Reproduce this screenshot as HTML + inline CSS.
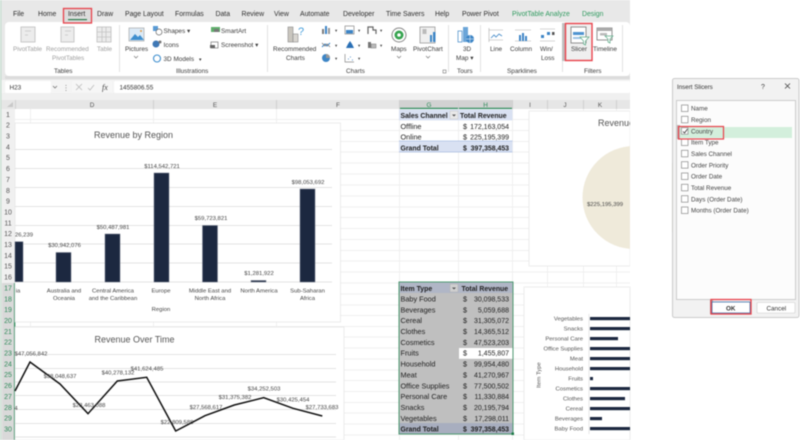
<!DOCTYPE html>
<html><head><meta charset="utf-8"><style>
html,body{margin:0;padding:0;background:#fff;width:800px;height:440px;overflow:hidden}
svg{display:block;filter:blur(.4px)}
text{font-family:"Liberation Sans",sans-serif;font-size:6.4px;fill:#444}
.t{font-size:6.9px;fill:#2e2e2e}
.r{font-size:6.4px;fill:#3c3c3c}
.d{font-size:6.3px;fill:#a0a0a0}
.c{font-size:5.9px;text-anchor:middle;fill:#444}
.h{font-size:6.4px;text-anchor:middle;fill:#555}
.rn{font-size:7px;text-anchor:middle;fill:#555}
.g{fill:#2c8a58}
.p{font-size:7.3px;fill:#222}
.b{font-size:6.9px;font-weight:bold;fill:#222}
.n{font-size:7px;text-anchor:end;fill:#222}
.nb{font-size:6.9px;text-anchor:end;font-weight:bold;fill:#222}
.y{font-size:5.9px;text-anchor:end;fill:#555}
.s{font-size:6.3px;fill:#444}
</style></head><body>
<svg width="800" height="440" viewBox="0 0 800 440" xmlns="http://www.w3.org/2000/svg">
<rect x="0" y="0" width="630" height="100" fill="#e8e8e8"/>
<rect x="5" y="22" width="625" height="54" rx="4" fill="#fff"/>
<rect x="5" y="76" width="625" height="3" fill="#dcdcdc"/>
<rect x="0" y="80" width="630" height="13" fill="#f4f4f4"/>
<rect x="5" y="81" width="46" height="12" rx="2" fill="#fff"/>
<rect x="114" y="81" width="516" height="12" rx="2" fill="#fff"/>
<rect x="72" y="81" width="40" height="12" fill="#f6f6f6"/>
<rect x="0" y="93" width="630" height="7" fill="#f0f0f0"/>

<!-- tabs -->
<g class="t">
<text class="t" x="13" y="16">File</text><text class="t" x="38" y="16">Home</text>
<rect x="63" y="8" width="29" height="15" fill="#dcdcdc"/>
<text class="t" x="68" y="16">Insert</text>
<rect x="68" y="19" width="19" height="1.2" fill="#2b7a4b"/>
<rect x="63.5" y="8.5" width="28" height="14.500" fill="none" stroke="#e8414a" stroke-width="1.3"/>
<text class="t" x="97" y="16">Draw</text><text class="t" x="125" y="16">Page Layout</text><text class="t" x="175" y="16">Formulas</text><text class="t" x="215.500" y="16">Data</text><text class="t" x="241.500" y="16">Review</text><text class="t" x="274" y="16">View</text><text class="t" x="300" y="16">Automate</text><text class="t" x="343" y="16">Developer</text><text class="t" x="386" y="16">Time Savers</text><text class="t" x="435" y="16">Help</text><text class="t" x="462" y="16">Power Pivot</text>
<text class="t" x="512" y="16" style="fill:#2f9a5f">PivotTable Analyze</text><text class="t" x="582" y="16" style="fill:#2f9a5f">Design</text>
</g>

<!-- ribbon separators -->
<g fill="#e2e2e2"><rect x="119" y="25" width="1" height="47"/><rect x="267" y="25" width="1" height="47"/><rect x="448" y="25" width="1" height="47"/><rect x="480" y="25" width="1" height="47"/><rect x="562" y="25" width="1" height="47"/><rect x="622" y="25" width="1" height="47"/></g>

<!-- Tables group -->
<g fill="#ececec" stroke="#c8c8c8" stroke-width="1">
<rect x="21" y="27" width="14" height="15"/><rect x="61" y="27" width="13" height="15"/><rect x="97" y="27" width="14" height="15"/>
</g>
<path d="M25 31h6M25 35h3M65 31h6M65 35h3M97 32h14M97 37h14M102 27v15M106 27v15" stroke="#c4c4c4" fill="none" stroke-width=".8"/>
<text class="d" x="13" y="51">PivotTable</text><text class="d" x="46" y="51">Recommended</text><text class="d" x="52" y="60">PivotTables</text><text class="d" x="97" y="51">Table</text>
<text class="r" x="54" y="73">Tables</text>

<!-- Illustrations -->
<rect x="129" y="28" width="15" height="13" fill="#dbeaf6" stroke="#a7a7a7" stroke-width=".7"/><path d="M130 40l5-6 3 3 2-2 4 5z" fill="#3f8fcf"/><circle cx="141" cy="31" r="1" fill="#e39a45"/>
<text class="r" x="125" y="51">Pictures</text><path d="M134 56l2 2 2-2" stroke="#777" fill="none" stroke-width=".7"/>
<rect x="153" y="26" width="5" height="5" fill="#5a9bd5"/><circle cx="159" cy="32" r="3" fill="#fff" stroke="#666" stroke-width=".7"/>
<text class="r" x="163.500" y="33">Shapes ▾</text>
<circle cx="156" cy="44" r="3.500" fill="#3f78b5"/><circle cx="160" cy="42" r="1.500" fill="#777"/>
<text class="r" x="163.500" y="47">Icons</text>
<circle cx="157" cy="58.500" r="3.500" fill="#fff" stroke="#3f8fcf" stroke-width="1.100"/>
<text class="r" x="163.500" y="61">3D Models</text><text class="r" x="199" y="61" style="font-size:5px">▾</text>
<rect x="211" y="27" width="9" height="5" fill="#5fae6b"/><rect x="214" y="29" width="5" height="3" fill="#777"/>
<text class="r" x="221" y="33">SmartArt</text>
<rect x="211" y="42" width="7" height="6" fill="#fff" stroke="#777" stroke-width=".7"/><rect x="210" y="45" width="5" height="3" fill="#666"/>
<text class="r" x="221" y="47">Screenshot ▾</text>
<text class="r" x="176" y="73">Illustrations</text>

<!-- Recommended charts -->
<rect x="288" y="27" width="5" height="15" fill="#c9c5be" stroke="#8a8a8a" stroke-width=".6"/><rect x="293" y="34" width="5" height="8" fill="#d8d5cf" stroke="#8a8a8a" stroke-width=".6"/>
<text x="298" y="35" style="font-size:11px;fill:#4aa0dc">?</text>
<text class="r" x="273" y="51">Recommended</text><text class="r" x="286" y="60">Charts</text>

<!-- Charts group -->
<g>
<rect x="322" y="29" width="2" height="5" fill="#7a7a7a"/><rect x="325" y="26" width="2" height="8" fill="#3d85c6"/><rect x="328" y="28" width="2" height="6" fill="#999"/>
<rect x="345" y="26" width="9" height="8" fill="#fff" stroke="#888" stroke-width=".7"/><rect x="346" y="30" width="7" height="3.500" fill="#3d85c6"/>
<path d="M368 34v-7h5v3h3v4" fill="none" stroke="#666" stroke-width="1.200"/>
<path d="M322 47l3-3 2 2 3-3" stroke="#3d85c6" fill="none" stroke-width="1"/><path d="M322 43l3 3 2-2 3 3" stroke="#777" fill="none" stroke-width=".8"/>
<path d="M346 48l2-4 2-3 2 3 2 4z" fill="#2a6fb5"/>
<rect x="368" y="42" width="3" height="6" fill="#777"/><rect x="371" y="44" width="5" height="4" fill="#b9b9b9" stroke="#777" stroke-width=".5"/>
<circle cx="326" cy="58" r="4" fill="#3d85c6"/><path d="M326 58v-4a4 4 0 0 1 4 4z" fill="#999"/>
<path d="M345 54v8h9" stroke="#888" fill="none" stroke-width=".7"/><path d="M348 59h.8M350 57h.8M352 60h.8" stroke="#3d85c6" stroke-width="1"/>
<text x="335" y="32" style="font-size:4.500px">▾</text><text x="358" y="32" style="font-size:4.500px">▾</text><text x="380" y="32" style="font-size:4.500px">▾</text>
<text x="335" y="47" style="font-size:4.500px">▾</text><text x="358" y="47" style="font-size:4.500px">▾</text><text x="380" y="47" style="font-size:4.500px">▾</text>
<text x="335" y="60" style="font-size:4.500px">▾</text><text x="358" y="60" style="font-size:4.500px">▾</text>
</g>
<text class="r" x="346" y="73">Charts</text>
<rect x="443" y="70" width="3" height="3" fill="none" stroke="#777" stroke-width=".6"/>
<circle cx="399" cy="35" r="7" fill="#fff" stroke="#888"/><circle cx="399" cy="35" r="4.500" fill="#36a34f"/><circle cx="399" cy="35" r="1.800" fill="#fff"/>
<text class="r" x="391" y="51">Maps</text><path d="M397 56l2 2 2-2" stroke="#777" fill="none" stroke-width=".7"/>
<rect x="420" y="27" width="15" height="16" fill="#f0f0f0" stroke="#9a9a9a" stroke-width=".8"/><rect x="430" y="35" width="2" height="7" fill="#3d85c6"/><rect x="433" y="32" width="2.500" height="10" fill="#3d85c6"/><rect x="422.500" y="29" width="4" height="5" fill="#bbb"/>
<text class="r" x="413" y="51">PivotChart</text><path d="M426 56l2 2 2-2" stroke="#777" fill="none" stroke-width=".7"/>

<!-- Tours -->
<rect x="458" y="31" width="4" height="11" fill="#fff" stroke="#3d85c6" stroke-width=".7"/><rect x="463" y="27" width="5" height="15" fill="#6ba5d8"/><circle cx="470" cy="39" r="4" fill="#3d85c6"/><path d="M466 39h8M470 35v8" stroke="#fff" stroke-width=".5"/>
<text class="r" x="463" y="51">3D</text><text class="r" x="456" y="60">Map ▾</text>
<text class="r" x="457" y="73">Tours</text>

<!-- Sparklines -->
<path d="M489 30h14M489 40h14M489 28v14" stroke="#aaa" fill="none" stroke-width=".6"/><path d="M491 38l3-3 2 2 3-3 3 2" stroke="#3d85c6" fill="none" stroke-width=".8"/>
<text class="r" x="490" y="51">Line</text>
<path d="M515 30h16M515 41h16" stroke="#aaa" stroke-width=".6"/><rect x="519" y="35" width="2" height="6" fill="#3d85c6"/><rect x="522" y="33" width="2" height="8" fill="#3d85c6"/><rect x="525" y="36" width="2" height="5" fill="#3d85c6"/>
<text class="r" x="510" y="51">Column</text>
<path d="M540 29h15M540 41h15" stroke="#aaa" stroke-width=".6"/><rect x="541" y="35" width="3" height="3" fill="#3d85c6"/><rect x="547" y="32" width="3" height="3" fill="#3d85c6"/><rect x="552" y="32" width="2.500" height="3" fill="#555"/>
<text class="r" x="540" y="51">Win/</text><text class="r" x="541" y="60">Loss</text>
<text class="r" x="507" y="73">Sparklines</text>

<!-- Filters -->
<rect x="562" y="23" width="4" height="38" fill="#c0c0c0"/>
<rect x="566" y="24" width="25" height="36" fill="#efefef"/>
<rect x="571" y="27" width="15" height="16" fill="#fff" stroke="#777" stroke-width=".8"/><rect x="573" y="32" width="11" height="3" fill="#4f93d0"/><rect x="573" y="37" width="8" height="2" fill="#9dc3e6"/><path d="M580 37h9l-3.500 4v4l-2-1v-3z" fill="#fff" stroke="#59a985" stroke-width=".7"/>
<text class="r" x="571" y="51">Slicer</text>
<rect x="565.500" y="23.500" width="26.500" height="37" fill="none" stroke="#e8414a" stroke-width="1.400"/>
<rect x="597" y="28" width="15" height="12" fill="#fff" stroke="#777" stroke-width=".8"/><rect x="597" y="28" width="15" height="3" fill="#aaa"/><rect x="600" y="33" width="7" height="2.500" fill="#bbb"/><path d="M605 36h8l-3 3v4l-2-1v-3z" fill="#fff" stroke="#59a985" stroke-width=".7"/>
<text class="r" x="593" y="51">Timeline</text>
<text class="r" x="584" y="73">Filters</text>

<!-- formula bar -->
<text x="9.500" y="89.500" style="font-size:6.400px;fill:#333">H23</text>
<path d="M53 86l2 2 2-2" stroke="#666" fill="none" stroke-width=".7"/>
<path d="M66 85v.8M66 87.500v.8M66 90v.8" stroke="#666" stroke-width=".8"/>
<path d="M76 84l6 6M82 84l-6 6M88 88l2 2 4-5" stroke="#bbb" fill="none" stroke-width=".8"/>
<text x="102" y="90" style="font-family:'Liberation Serif',serif;font-style:italic;font-size:8px;fill:#444">fx</text>
<text x="119.500" y="89.500" style="font-size:6.400px;fill:#333">1455806.55</text>

<!-- column headers -->
<rect x="0" y="100" width="630" height="9" fill="#e6e6e6"/>
<rect x="399" y="100" width="114" height="9" fill="#d2d2d2"/>
<rect x="399" y="107.800" width="114" height="1.200" fill="#2c8a58"/>
<path d="M7 107l6-5v5z" fill="#c8c8c8"/>
<path d="M15.500 100v9M153.500 100v9M276.500 100v9M399.500 100v9M458.500 100v9M512.500 100v9M547.500 100v9M583.500 100v9M616.500 100v9" stroke="#cfcfcf" stroke-width="1"/>
<text class="h" x="92" y="107">D</text><text class="h" x="215" y="107">E</text><text class="h" x="338" y="107">F</text>
<text class="h g" x="429" y="107">G</text><text class="h g" x="485.500" y="107">H</text>
<text class="h" x="530" y="107">I</text><text class="h" x="565" y="107">J</text><text class="h" x="600" y="107">K</text>

<!-- sheet grid -->
<rect x="0" y="109" width="630" height="331" fill="#fff"/>
<g stroke="#efefef" stroke-width="1" fill="none">
<path d="M15 119.500H630M15 130.500H630M15 141.500H630M15 152H630M15 163H630M15 174H630M15 185H630M15 196H630M15 207H630M15 217.500H630M15 228.500H630M15 239.500H630M15 250.500H630M15 261H630M15 272H630M15 283H630M15 294H630M15 305H630M15 315.500H630M15 326.500H630M15 337H630M15 348H630M15 359H630M15 370H630M15 380.500H630M15 391.500H630M15 402.500H630M15 413H630M15 424H630M15 435H630"/>
<path d="M30.500 109V440M153.500 109V440M276.500 109V440M399.500 109V440M458.500 109V440M512.500 109V440M547.500 109V440M583.500 109V440M616.500 109V440"/>
</g>

<!-- row headers -->
<rect x="0" y="109" width="15" height="331" fill="#f0f0f0"/>
<rect x="2" y="283" width="13" height="157" fill="#d9d9d9"/>
<rect x="0" y="0" width="1.500" height="440" fill="#c9ded2"/>
<rect x="14" y="283" width="1.300" height="157" fill="#2c8a58"/>
<g>
<text class="rn" x="8" y="116.800">1</text><text class="rn" x="8" y="127.700">2</text><text class="rn" x="8" y="138.500">3</text><text class="rn" x="8" y="149.400">4</text><text class="rn" x="8" y="160.200">5</text><text class="rn" x="8" y="171.100">6</text><text class="rn" x="8" y="181.900">7</text><text class="rn" x="8" y="192.800">8</text><text class="rn" x="8" y="203.600">9</text><text class="rn" x="8" y="214.500">10</text><text class="rn" x="8" y="225.300">11</text><text class="rn" x="8" y="236.200">12</text><text class="rn" x="8" y="247">13</text><text class="rn" x="8" y="257.900">14</text><text class="rn" x="8" y="268.700">15</text><text class="rn" x="8" y="279.600">16</text>
<text class="rn g" x="8" y="290.400">17</text><text class="rn g" x="8" y="301.300">18</text><text class="rn g" x="8" y="312.100">19</text><text class="rn g" x="8" y="323">20</text><text class="rn g" x="8" y="333.800">21</text><text class="rn g" x="8" y="344.700">22</text><text class="rn g" x="8" y="355.500">23</text><text class="rn g" x="8" y="366.400">24</text><text class="rn g" x="8" y="377.200">25</text><text class="rn g" x="8" y="388.100">26</text><text class="rn g" x="8" y="398.900">27</text><text class="rn g" x="8" y="409.800">28</text><text class="rn g" x="8" y="420.600">29</text><text class="rn g" x="8" y="431.500">30</text>
</g>

<!-- Chart 1 -->
<rect x="15" y="123" width="325.500" height="199" fill="#fff" stroke="#e4e4e4" stroke-width=".7"/>
<text x="94" y="138" style="font-size:9px;fill:#555">Revenue by Region</text>
<path d="M15 149.500H332M15 168.500H332M15 187.500H332M15 206.500H332M15 225.500H332M15 244H332M15 263H332M15 282H332" stroke="#e3e3e3" stroke-width="1"/>
<g fill="#1c2840" stroke="#6d7585" stroke-width=".5">
<rect x="15" y="241.700" width="8" height="40"/><rect x="56" y="252.500" width="15" height="29.500"/><rect x="105" y="234" width="15" height="48"/><rect x="154" y="173" width="15" height="109"/><rect x="202.500" y="225.500" width="15" height="56.500"/><rect x="251" y="280.500" width="15" height="1.500"/><rect x="300" y="189" width="15" height="93"/>
</g>
<text class="c" x="24" y="236.500">26,239</text>
<text class="c" x="64.500" y="247">$30,942,076</text><text class="c" x="113" y="229">$50,487,981</text><text class="c" x="162" y="168">$114,542,721</text><text class="c" x="211" y="220">$59,723,821</text><text class="c" x="259" y="275">$1,281,922</text><text class="c" x="308" y="184">$98,053,692</text>
<text class="c" x="18" y="292.500">ia</text>
<text class="c" x="64" y="292.500">Australia and</text><text class="c" x="64" y="300">Oceania</text>
<text class="c" x="113" y="292.500">Central America</text><text class="c" x="113" y="300">and the Caribbean</text>
<text class="c" x="161" y="292.500">Europe</text>
<text class="c" x="210" y="292.500">Middle East and</text><text class="c" x="210" y="300">North Africa</text>
<text class="c" x="259" y="292.500">North America</text>
<text class="c" x="307.500" y="292.500">Sub-Saharan</text><text class="c" x="307.500" y="300">Africa</text>
<text class="c" x="161" y="311">Region</text>

<!-- Chart 2 -->
<rect x="15" y="327" width="329" height="113" fill="#fff" stroke="#e4e4e4" stroke-width=".7"/>
<text x="94.500" y="342.500" style="font-size:9px;fill:#555">Revenue Over Time</text>
<path d="M15 354.500H336M15 368.500H336M15 382H336M15 395.500H336M15 409.500H336M15 423.500H336M15 437H336" stroke="#e3e3e3" stroke-width="1"/>
<polyline points="15,391 30,362 60,384 88,413.700 117.300,381 146.700,377.300 175.700,431 205,415.700 234.300,405 263.700,397.700 293,408.300 322.300,416" fill="none" stroke="#111" stroke-width="1.500"/>
<text class="c" x="31" y="355.500">$47,056,842</text><text class="c" x="60" y="378">$38,048,637</text><text class="c" x="89" y="407">$28,463,088</text><text class="c" x="118" y="374.500">$40,278,132</text><text class="c" x="147" y="370.500">$41,624,485</text><text class="c" x="177" y="424">$22,809,588</text><text class="c" x="206" y="409">$27,568,617</text><text class="c" x="235" y="399">$31,375,382</text><text class="c" x="264" y="390.500">$34,252,503</text><text class="c" x="293" y="401.500">$30,425,454</text><text class="c" x="322" y="409">$27,733,683</text>
<text class="c" x="16" y="410">4</text>

<!-- Pivot 1 -->
<rect x="399" y="109.500" width="113.500" height="10.900" fill="#d9e1f2"/>
<rect x="399" y="141" width="113.500" height="11" fill="#d9e1f2"/>
<path d="M399 141H512.500M399 152H512.500" stroke="#8ea9db" stroke-width=".5"/>
<text class="b" x="400.500" y="117.800">Sales Channel</text><rect x="450" y="111" width="8" height="8" fill="#e8e8e8" stroke="#c8c8c8" stroke-width=".5"/><path d="M452 114.500h4l-2 2z" fill="#555"/>
<text class="b" x="460" y="117.800">Total Revenue</text>
<text class="p" x="400.500" y="128.800">Offline</text><text class="p" x="463" y="128.800">$</text><text class="n" x="509" y="128.800">172,163,054</text>
<text class="p" x="400.500" y="139.500">Online</text><text class="p" x="463" y="139.500">$</text><text class="n" x="509" y="139.500">225,195,399</text>
<text class="b" x="400.500" y="150.500">Grand Total</text><text class="b" x="463" y="150.500">$</text><text class="nb" x="509" y="150.500">397,358,453</text>

<!-- Pie -->
<rect x="529" y="111" width="101" height="155" fill="#fff" stroke="#e6e6e6" stroke-width=".7"/>
<text x="598" y="126" style="font-size:9px;fill:#555">Revenue</text>
<circle cx="634" cy="197.500" r="51.500" fill="#efeada"/>
<rect x="630" y="100" width="42" height="340" fill="#fff"/>
<text x="587" y="206" style="font-size:5.900px;fill:#444">$225,195,399</text>

<!-- Pivot 2 -->
<rect x="399" y="282" width="114" height="152" fill="#bfbfbf"/>
<rect x="399" y="282" width="114" height="11" fill="#b0b6c6"/>
<rect x="399" y="423" width="114" height="11" fill="#a8aebf"/>
<rect x="459" y="348" width="53.500" height="10.800" fill="#fff"/>
<rect x="399" y="282" width="114" height="152" fill="none" stroke="#4f9a72" stroke-width="1"/>
<rect x="511.500" y="432.500" width="2.500" height="2.500" fill="#1e7a48"/>
<rect x="450" y="284" width="8" height="8" fill="#cfcfcf" stroke="#aaa" stroke-width=".4"/><path d="M452 287.500h4l-2 2z" fill="#555"/>
<text class="b" x="400.500" y="290.800">Item Type</text><text class="b" x="461.500" y="290.800">Total Revenue</text>
<text class="p" x="400.500" y="301.500">Baby Food</text><text class="p" x="463" y="301.500">$</text><text class="n" x="509" y="301.500">30,098,533</text>
<text class="p" x="400.500" y="312.300">Beverages</text><text class="p" x="463" y="312.300">$</text><text class="n" x="509" y="312.300">5,059,688</text>
<text class="p" x="400.500" y="323.200">Cereal</text><text class="p" x="463" y="323.200">$</text><text class="n" x="509" y="323.200">31,305,072</text>
<text class="p" x="400.500" y="334">Clothes</text><text class="p" x="463" y="334">$</text><text class="n" x="509" y="334">14,365,512</text>
<text class="p" x="400.500" y="344.900">Cosmetics</text><text class="p" x="463" y="344.900">$</text><text class="n" x="509" y="344.900">47,523,203</text>
<text class="p" x="400.500" y="355.700">Fruits</text><text class="p" x="463" y="355.700">$</text><text class="n" x="509" y="355.700">1,455,807</text>
<text class="p" x="400.500" y="366.600">Household</text><text class="p" x="463" y="366.600">$</text><text class="n" x="509" y="366.600">99,954,480</text>
<text class="p" x="400.500" y="377.400">Meat</text><text class="p" x="463" y="377.400">$</text><text class="n" x="509" y="377.400">41,270,967</text>
<text class="p" x="400.500" y="388.300">Office Supplies</text><text class="p" x="463" y="388.300">$</text><text class="n" x="509" y="388.300">77,500,502</text>
<text class="p" x="400.500" y="399.100">Personal Care</text><text class="p" x="463" y="399.100">$</text><text class="n" x="509" y="399.100">11,330,884</text>
<text class="p" x="400.500" y="410">Snacks</text><text class="p" x="463" y="410">$</text><text class="n" x="509" y="410">20,195,794</text>
<text class="p" x="400.500" y="420.800">Vegetables</text><text class="p" x="463" y="420.800">$</text><text class="n" x="509" y="420.800">17,298,011</text>
<text class="b" x="400.500" y="431.700">Grand Total</text><text class="b" x="463" y="431.700">$</text><text class="nb" x="509" y="431.700">397,358,453</text>

<!-- Bar chart -->
<rect x="524" y="287" width="106" height="153" fill="#fff" stroke="#e6e6e6" stroke-width=".7"/>
<path d="M589 314V434" stroke="#ddd" stroke-width=".7"/>
<g fill="#1c2840">
<rect x="590" y="317" width="40" height="3.200"/><rect x="590" y="327" width="40" height="3.200"/><rect x="590" y="337" width="28" height="3.200"/><rect x="590" y="347" width="40" height="3.200"/><rect x="590" y="357" width="40" height="3.200"/><rect x="590" y="367" width="40" height="3.200"/><rect x="590" y="377" width="3" height="3.200"/><rect x="590" y="387" width="40" height="3.200"/><rect x="590" y="397" width="35" height="3.200"/><rect x="590" y="407" width="40" height="3.200"/><rect x="590" y="417" width="12" height="3.200"/><rect x="590" y="427" width="40" height="3.200"/>
</g>
<text class="y" x="583" y="320.500">Vegetables</text><text class="y" x="583" y="330.500">Snacks</text><text class="y" x="583" y="340.500">Personal Care</text><text class="y" x="583" y="350.500">Office Supplies</text><text class="y" x="583" y="360.500">Meat</text><text class="y" x="583" y="370.500">Household</text><text class="y" x="583" y="380.500">Fruits</text><text class="y" x="583" y="390.500">Cosmetics</text><text class="y" x="583" y="400.500">Clothes</text><text class="y" x="583" y="410.500">Cereal</text><text class="y" x="583" y="420.500">Beverages</text><text class="y" x="583" y="430.500">Baby Food</text>
<text transform="translate(540.500,388) rotate(-90)" style="font-size:5.900px;fill:#555">Item Type</text>

<!-- Dialog -->
<rect x="672.500" y="78.500" width="126.500" height="239" rx="2" fill="#f2f2f2" stroke="#bdbdbd" stroke-width=".8"/>
<text x="677" y="89" style="font-size:6.200px;fill:#333">Insert Slicers</text>
<text x="761" y="89" style="font-size:7px;fill:#444">?</text>
<path d="M785 83.500l5 5M790 83.500l-5 5" stroke="#444" stroke-width=".8"/>
<rect x="676.500" y="100.500" width="119" height="199" fill="#fcfcfc" stroke="#bbb" stroke-width=".7"/>
<rect x="678" y="127" width="114" height="11" fill="#d3efdc"/>
<rect x="677" y="125" width="3" height="14" fill="#bdbdbd"/>
<g fill="#fff" stroke="#8a8a8a" stroke-width=".7">
<rect x="681.500" y="105" width="6.500" height="6.500"/><rect x="681.500" y="116.300" width="6.500" height="6.500"/><rect x="681.500" y="127.700" width="6.500" height="6.500"/><rect x="681.500" y="139" width="6.500" height="6.500"/><rect x="681.500" y="150.300" width="6.500" height="6.500"/><rect x="681.500" y="161.700" width="6.500" height="6.500"/><rect x="681.500" y="173" width="6.500" height="6.500"/><rect x="681.500" y="184.300" width="6.500" height="6.500"/><rect x="681.500" y="195.700" width="6.500" height="6.500"/><rect x="681.500" y="207" width="6.500" height="6.500"/>
</g>
<path d="M683 131.500l1.500 1.500 3-4" fill="none" stroke="#333" stroke-width=".8"/>
<text class="s" x="691" y="110.700">Name</text><text class="s" x="691" y="122">Region</text><text class="s" x="691" y="133.300">Country</text><text class="s" x="691" y="144.700">Item Type</text><text class="s" x="691" y="156">Sales Channel</text><text class="s" x="691" y="167.300">Order Priority</text><text class="s" x="691" y="178.700">Order Date</text><text class="s" x="691" y="190">Total Revenue</text><text class="s" x="691" y="201.300">Days (Order Date)</text><text class="s" x="691" y="212.700">Months (Order Date)</text>
<rect x="678.500" y="126.500" width="45" height="12.500" fill="none" stroke="#e8414a" stroke-width="1.200"/>
<rect x="710" y="300" width="3" height="14" fill="#aaa"/>
<rect x="712" y="302" width="38" height="11" fill="#fff" stroke="#3b6fa8" stroke-width=".8"/>
<text x="726" y="310.500" style="font-size:6.300px;font-weight:bold;fill:#333">OK</text>
<rect x="711" y="299.500" width="40" height="14.500" fill="none" stroke="#e8414a" stroke-width="1.300"/>
<rect x="757" y="302.500" width="38" height="10.500" rx="1" fill="#fff" stroke="#ccc" stroke-width=".6"/>
<text x="766.500" y="310.500" style="font-size:6.300px;fill:#333">Cancel</text>
</svg>
</body></html>
